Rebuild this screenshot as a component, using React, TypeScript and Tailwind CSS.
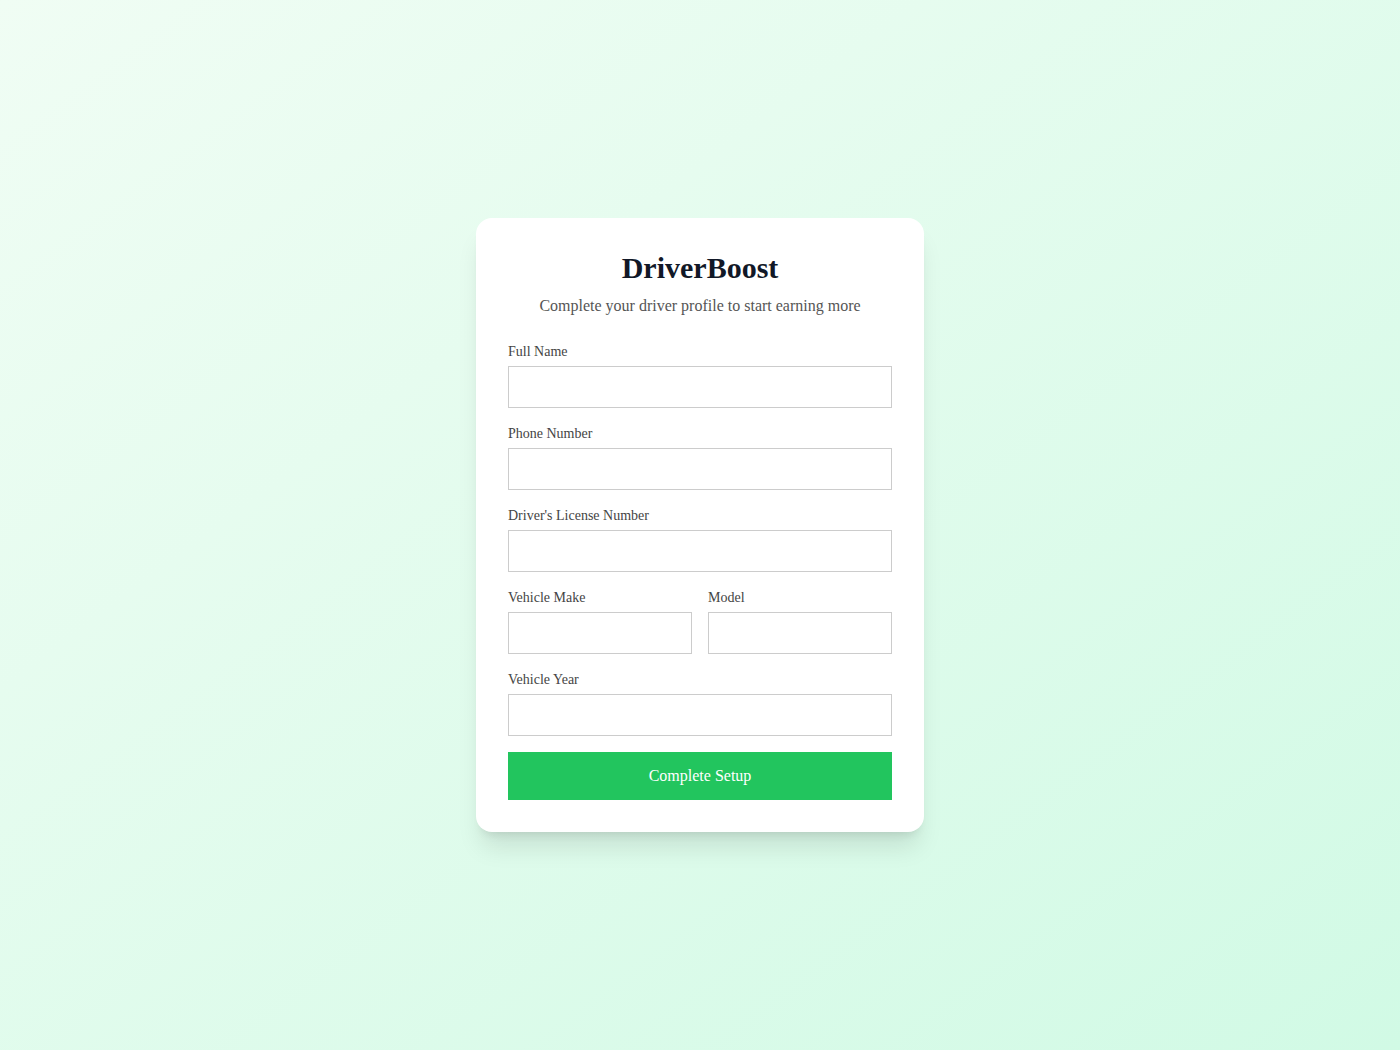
import React, { useState } from "react";

type Field = { id: string; label: string };

const Input: React.FC<Field & { value: string; onChange: (v: string) => void }> = ({ id, label, value, onChange }) => (
  <div>
    <label htmlFor={id} className="block text-sm text-[#444444] mb-1">
      {label}
    </label>
    <input
      id={id}
      type="text"
      value={value}
      onChange={(e) => onChange(e.target.value)}
      className="block w-full border border-[#cccccc] bg-white px-3 py-2 text-base text-[#111827] focus:outline-none focus:ring-2 focus:ring-[#22c55e]"
    />
  </div>
);

const App: React.FC = () => {
  const [form, setForm] = useState({ name: "", phone: "", license: "", make: "", model: "", year: "" });
  const set = (k: keyof typeof form) => (v: string) => setForm({ ...form, [k]: v });

  return (
    <div
      className="min-h-screen flex items-center justify-center bg-gradient-to-br from-[#f0fdf4] to-[#d1fae5]"
      style={{ fontFamily: '"Liberation Serif", "Times New Roman", serif' }}
    >
      <div className="w-full max-w-md bg-white rounded-2xl shadow-xl p-8">
        <h1 className="text-3xl font-bold text-[#111827] text-center">DriverBoost</h1>
        <p className="mt-2 mb-6 text-base text-[#555555] text-center">
          Complete your driver profile to start earning more
        </p>
        <form className="space-y-4" onSubmit={(e) => e.preventDefault()}>
          <Input id="name" label="Full Name" value={form.name} onChange={set("name")} />
          <Input id="phone" label="Phone Number" value={form.phone} onChange={set("phone")} />
          <Input id="license" label="Driver's License Number" value={form.license} onChange={set("license")} />
          <div className="grid grid-cols-2 gap-4">
            <Input id="make" label="Vehicle Make" value={form.make} onChange={set("make")} />
            <Input id="model" label="Model" value={form.model} onChange={set("model")} />
          </div>
          <Input id="year" label="Vehicle Year" value={form.year} onChange={set("year")} />
          <button
            type="submit"
            className="block w-full bg-[#22c55e] py-3 text-base text-white hover:bg-[#16a34a]"
          >
            Complete Setup
          </button>
        </form>
      </div>
    </div>
  );
};

export default App;
